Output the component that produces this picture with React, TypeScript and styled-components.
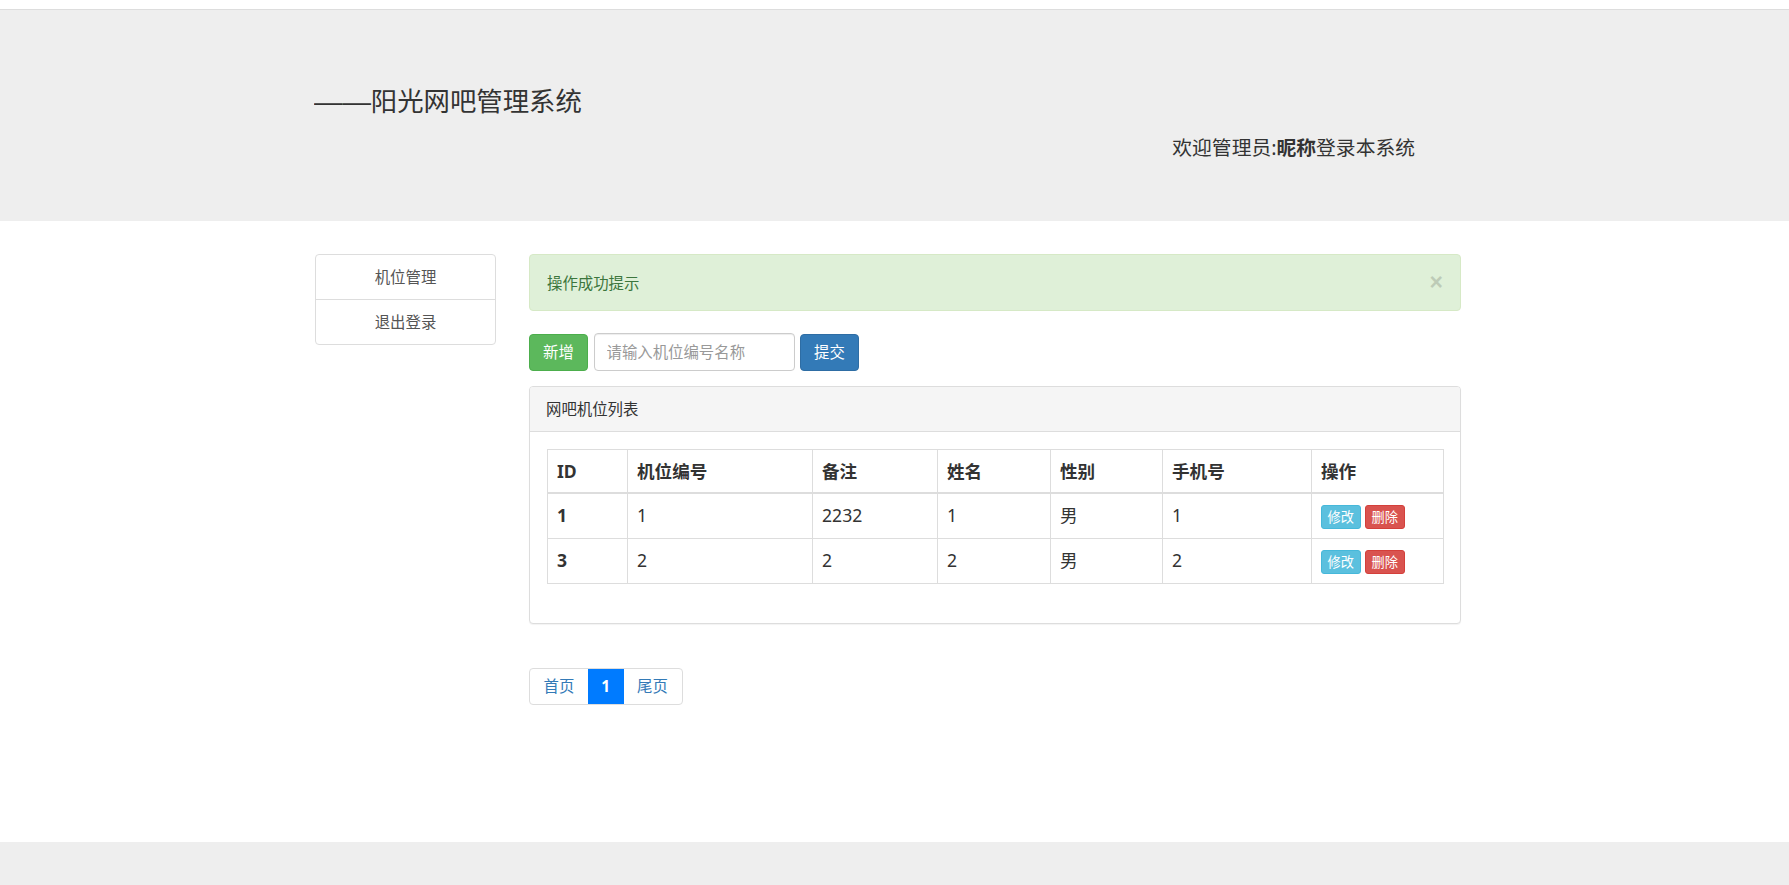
import styled, { createGlobalStyle } from "styled-components";

const GlobalStyle = createGlobalStyle`
  html, body {
    margin: 0;
    padding: 0;
    background: #fff;
  }
  body {
    font-family: "Noto Sans", "Noto Sans CJK SC", sans-serif;
    font-size: 15.4px;
    line-height: 22px;
    color: #333;
  }
  * {
    box-sizing: border-box;
  }
`;

const COLUMNS = [80, 185, 125, 113, 112, 149, 132];
const HEADERS = ["ID", "机位编号", "备注", "姓名", "性别", "手机号", "操作"];
const ROWS = [
  { id: 1, code: "1", note: "2232", name: "1", gender: "男", phone: "1" },
  { id: 3, code: "2", note: "2", name: "2", gender: "男", phone: "2" },
];

const App = () => {
  return (
    <Page>
      <GlobalStyle />
      <Jumbotron>
        <Container>
          <Title>
            <Dashes>——</Dashes>阳光网吧管理系统
          </Title>
          <Welcome>
            欢迎管理员:<strong>昵称</strong>登录本系统
          </Welcome>
        </Container>
      </Jumbotron>

      <Content>
        <SideNav>
          <SideItem>机位管理</SideItem>
          <SideItem>退出登录</SideItem>
        </SideNav>

        <Main>
          <Alert>
            操作成功提示
            <CloseButton>×</CloseButton>
          </Alert>

          <Toolbar>
            <Button $color="#5cb85c" $border="#4cae4c">
              新增
            </Button>
            <SearchInput placeholder="请输入机位编号名称" />
            <Button $color="#337ab7" $border="#2e6da4">
              提交
            </Button>
          </Toolbar>

          <Panel>
            <PanelHeading>网吧机位列表</PanelHeading>
            <PanelBody>
              <Table>
                <colgroup>
                  {COLUMNS.map((width, index) => (
                    <col key={index} width={width} />
                  ))}
                </colgroup>
                <thead>
                  <tr>
                    {HEADERS.map((header) => (
                      <HeadCell key={header}>{header}</HeadCell>
                    ))}
                  </tr>
                </thead>
                <tbody>
                  {ROWS.map((row) => (
                    <tr key={row.id}>
                      <IdCell>{row.id}</IdCell>
                      <Cell>{row.code}</Cell>
                      <Cell>{row.note}</Cell>
                      <Cell>{row.name}</Cell>
                      <Cell>{row.gender}</Cell>
                      <Cell>{row.phone}</Cell>
                      <Cell>
                        <Actions>
                          <SmallButton $color="#5bc0de" $border="#46b8da">
                            修改
                          </SmallButton>
                          <SmallButton $color="#d9534f" $border="#d43f3a">
                            删除
                          </SmallButton>
                        </Actions>
                      </Cell>
                    </tr>
                  ))}
                </tbody>
              </Table>
            </PanelBody>
          </Panel>

          <Pagination>
            <PageLink>首页</PageLink>
            <PageLink $active>1</PageLink>
            <PageLink>尾页</PageLink>
          </Pagination>
        </Main>
      </Content>

      <Footer />
    </Page>
  );
};

export default App;

const Page = styled.div`
  min-height: 885px;
  padding-top: 9px;
  display: flex;
  flex-direction: column;
`;

const Jumbotron = styled.header`
  height: 212px;
  background: #eee;
  border-top: 1px solid #ddd;
  padding-top: 77px;
`;

const Container = styled.div`
  width: 1146px;
  margin-left: 315px;
`;

const Title = styled.h3`
  margin: 0;
  font-size: 26.4px;
  line-height: 29px;
  font-weight: 400;
`;

const Dashes = styled.span`
  display: inline-block;
  margin: 0 4px 0 -1px;
  font-family: "Liberation Sans", sans-serif;
  transform: scaleX(1.08);
  transform-origin: left center;
`;

const Welcome = styled.div`
  margin-top: 17px;
  padding-right: 46px;
  font-size: 19.8px;
  line-height: 28px;
  text-align: right;
`;

const Content = styled.main`
  flex: 1;
  width: 1146px;
  margin-left: 315px;
  padding-top: 33px;
  display: flex;
  align-items: flex-start;
  gap: 33px;
`;

const SideNav = styled.nav`
  width: 181px;
  flex-shrink: 0;
  border: 1px solid #ddd;
  border-radius: 4px;
`;

const SideItem = styled.a`
  display: block;
  height: 44px;
  line-height: 46px;
  text-align: center;
  color: #555;
  cursor: pointer;

  & + & {
    height: 45px;
    border-top: 1px solid #ddd;
  }
`;

const Main = styled.div`
  flex: 1;
  min-width: 0;
`;

const Alert = styled.div`
  position: relative;
  height: 57px;
  padding: 0 17px;
  line-height: 57px;
  background: #dff0d8;
  border: 1px solid #d6e9c6;
  border-radius: 4px;
  color: #3c763d;
`;

const CloseButton = styled.span`
  position: absolute;
  top: 0;
  right: 17px;
  font-family: "Liberation Sans", sans-serif;
  font-size: 23px;
  font-weight: 700;
  line-height: 55px;
  color: #000;
  opacity: 0.15;
  cursor: pointer;
`;

const Toolbar = styled.div`
  margin-top: 22px;
  display: flex;
  align-items: center;
  gap: 5.5px;
`;

const Button = styled.button<{ $color: string; $border: string }>`
  width: 59px;
  height: 37px;
  padding: 2px 0 0;
  font: inherit;
  color: #fff;
  background: ${({ $color }) => $color};
  border: 1px solid ${({ $border }) => $border};
  border-radius: 4px;
  cursor: pointer;
`;

const SearchInput = styled.input`
  width: 201px;
  height: 38px;
  padding: 0 12px;
  font: inherit;
  color: #555;
  background: #fff;
  border: 1px solid #ccc;
  border-radius: 4px;
  box-shadow: inset 0 1px 1px rgba(0, 0, 0, 0.075);

  &::placeholder {
    color: #999;
  }
`;

const Panel = styled.section`
  margin-top: 15px;
  background: #fff;
  border: 1px solid #ddd;
  border-radius: 4px;
  box-shadow: 0 1px 1px rgba(0, 0, 0, 0.05);
`;

const PanelHeading = styled.div`
  height: 45px;
  padding: 0 16px;
  line-height: 46px;
  background: #f5f5f5;
  border-bottom: 1px solid #ddd;
  border-radius: 3px 3px 0 0;
`;

const PanelBody = styled.div`
  padding: 17px 16px 39px 17px;
`;

const Table = styled.table`
  width: 896px;
  table-layout: fixed;
  border-collapse: collapse;
  font-size: 17.6px;
`;

const HeadCell = styled.th`
  height: 43px;
  padding: 0 9px;
  text-align: left;
  font-weight: 700;
  border: 1px solid #ddd;
  border-bottom-width: 2px;
`;

const Cell = styled.td`
  height: 45px;
  padding: 0 9px 2px;
  border: 1px solid #ddd;

  tr:first-child > & {
    height: 46px;
  }
`;

const IdCell = styled(Cell)`
  font-weight: 700;
`;

const Actions = styled.div`
  display: flex;
  gap: 4.5px;
  padding-top: 4px;
`;

const SmallButton = styled.button<{ $color: string; $border: string }>`
  width: 39.5px;
  height: 24px;
  padding: 0;
  font: inherit;
  font-size: 13.2px;
  line-height: 22px;
  color: #fff;
  background: ${({ $color }) => $color};
  border: 1px solid ${({ $border }) => $border};
  border-radius: 3px;
  cursor: pointer;
`;

const Pagination = styled.nav`
  margin-top: 44px;
  display: inline-flex;
  height: 37px;
  border: 1px solid #ddd;
  border-radius: 4px;
`;

const PageLink = styled.a<{ $active?: boolean }>`
  width: ${({ $active }) => ($active ? "35.5px" : "58px")};
  line-height: 36px;
  text-align: center;
  color: ${({ $active }) => ($active ? "#fff" : "#337ab7")};
  background: ${({ $active }) => ($active ? "#007bff" : "transparent")};
  font-weight: ${({ $active }) => ($active ? 700 : 400)};
  cursor: pointer;
`;

const Footer = styled.footer`
  height: 43px;
  background: #eee;
`;
